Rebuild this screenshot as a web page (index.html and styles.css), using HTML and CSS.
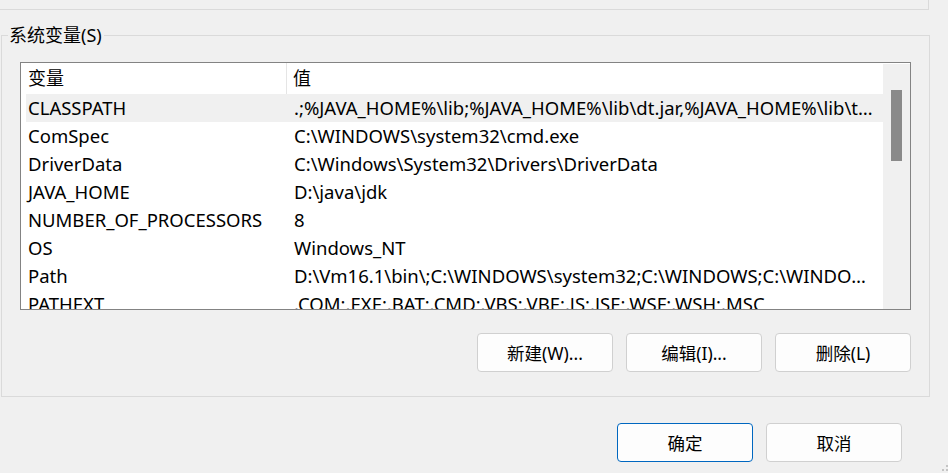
FILE: index.html
```html
<!DOCTYPE html>
<html lang="zh-CN">
<head>
    <meta charset="UTF-8">
    <title>环境变量</title>
    <link rel="stylesheet" href="styles.css">
</head>
<body>

<div class="user-box"></div>

<fieldset class="group">
    <legend>系统变量(S)</legend>

    <div class="listview">
        <div class="list-body">
            <div class="list-head">
                <span class="col-name">变量</span>
                <span class="col-value">值</span>
            </div>
            <div class="row selected">
                <span class="col-name">CLASSPATH</span>
                <span class="col-value">.;%JAVA_HOME%\lib;%JAVA_HOME%\lib\dt.jar,%JAVA_HOME%\lib\tools.jar</span>
            </div>
            <div class="row">
                <span class="col-name">ComSpec</span>
                <span class="col-value">C:\WINDOWS\system32\cmd.exe</span>
            </div>
            <div class="row">
                <span class="col-name">DriverData</span>
                <span class="col-value">C:\Windows\System32\Drivers\DriverData</span>
            </div>
            <div class="row">
                <span class="col-name">JAVA_HOME</span>
                <span class="col-value">D:\java\jdk</span>
            </div>
            <div class="row">
                <span class="col-name">NUMBER_OF_PROCESSORS</span>
                <span class="col-value">8</span>
            </div>
            <div class="row">
                <span class="col-name">OS</span>
                <span class="col-value">Windows_NT</span>
            </div>
            <div class="row">
                <span class="col-name">Path</span>
                <span class="col-value">D:\Vm16.1\bin\;C:\WINDOWS\system32;C:\WINDOWS;C:\WINDOWS\System32\Wbem</span>
            </div>
            <div class="row">
                <span class="col-name">PATHEXT</span>
                <span class="col-value">.COM;.EXE;.BAT;.CMD;.VBS;.VBE;.JS;.JSE;.WSF;.WSH;.MSC</span>
            </div>
        </div>
        <div class="scrollbar">
            <div class="thumb"></div>
        </div>
    </div>

    <div class="group-actions">
        <button class="btn">新建(W)...</button>
        <button class="btn">编辑(I)...</button>
        <button class="btn">删除(L)</button>
    </div>
</fieldset>

<div class="dialog-actions">
    <button class="btn default">确定</button>
    <button class="btn">取消</button>
</div>

<svg class="grip" width="6" height="6" viewBox="0 0 6 6">
    <rect x="4" y="0" width="2" height="2" fill="#c4c4c4"/>
    <rect x="4" y="4" width="2" height="2" fill="#c4c4c4"/>
    <rect x="0" y="4" width="2" height="2" fill="#c4c4c4"/>
</svg>

</body>
</html>
```

FILE: styles.css
```css
* {
    box-sizing: border-box;
}
body {
    margin: 0;
    background-color: #f0f0f0;
    font-family: "Noto Sans", "Noto Sans CJK SC", sans-serif;
    font-size: 18.5px;
    color: #000;
    overflow: hidden;
    height: 473px;
    position: relative;
}
.user-box {
    margin-left: -2px;
    width: 931px;
    height: 10px;
    border-right: 1px solid #dadada;
    border-bottom: 1px solid #dadada;
}
.group {
    margin: 15px 0 0 1px;
    width: 929px;
    padding: 17px 17px 24px 18px;
    border: 1px solid #dadada;
    min-width: 0;
}
.group legend {
    margin-left: -12px;
    padding: 0 2px 0 1px;
    line-height: 20px;
    font-size: 18px;
}
.listview {
    display: flex;
    width: 891px;
    height: 248px;
    border: 1px solid #838383;
    background-color: #fff;
    overflow: hidden;
}
.list-body {
    flex: 1;
    min-width: 0;
}
.list-head,
.row {
    display: flex;
    white-space: nowrap;
}
.list-head {
    height: 31px;
    line-height: 30px;
    padding-left: 5px;
    font-size: 18px;
}
.row {
    height: 28px;
    line-height: 28px;
    margin-left: 5px;
}
.row.selected {
    background-color: #f0f0f0;
}
.col-name {
    width: 261px;
    flex: none;
    padding-left: 2px;
}
.col-value {
    flex: 1;
    min-width: 0;
    padding-left: 7px;
    padding-right: 10px;
    overflow: hidden;
    text-overflow: ellipsis;
}
.list-head .col-name {
    border-right: 1px solid #e5e5e5;
}
.list-head .col-value {
    padding-left: 6px;
}
.scrollbar {
    width: 27px;
    margin-top: 1px;
    background-color: #f0f0f0;
    padding: 26px 0 0 8px;
}
.thumb {
    width: 11px;
    height: 71px;
    background-color: #8a8a8a;
}
.group-actions,
.dialog-actions {
    display: flex;
    justify-content: flex-end;
    gap: 13px;
}
.group-actions {
    margin-top: 23px;
    padding-right: 1px;
}
.dialog-actions {
    margin-top: 26px;
    width: 902px;
}
.btn {
    width: 136px;
    height: 39px;
    background-color: #fdfdfd;
    border: 1px solid #d0d0d0;
    border-radius: 4px;
    font-family: inherit;
    font-size: 17.5px;
    color: #000;
    padding: 0;
}
.btn.default {
    border-color: #0067c0;
}
.grip {
    position: absolute;
    right: 0;
    bottom: 2px;
}
```
